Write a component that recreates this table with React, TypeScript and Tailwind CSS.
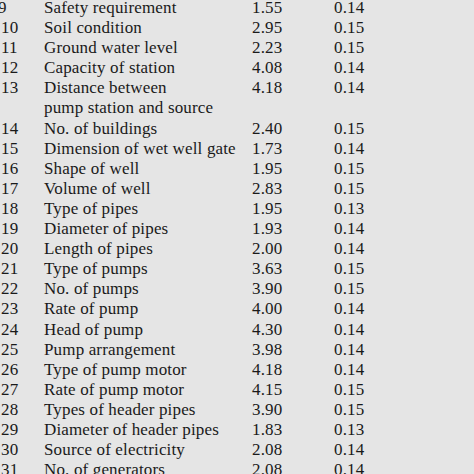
const rows: [string, string[], string, string][] = [
  ["9", ["Safety requirement"], "1.55", "0.14"],
  ["10", ["Soil condition"], "2.95", "0.15"],
  ["11", ["Ground water level"], "2.23", "0.15"],
  ["12", ["Capacity of station"], "4.08", "0.14"],
  ["13", ["Distance between", "pump station and source"], "4.18", "0.14"],
  ["14", ["No. of buildings"], "2.40", "0.15"],
  ["15", ["Dimension of wet well gate"], "1.73", "0.14"],
  ["16", ["Shape of well"], "1.95", "0.15"],
  ["17", ["Volume of well"], "2.83", "0.15"],
  ["18", ["Type of pipes"], "1.95", "0.13"],
  ["19", ["Diameter of pipes"], "1.93", "0.14"],
  ["20", ["Length of pipes"], "2.00", "0.14"],
  ["21", ["Type of pumps"], "3.63", "0.15"],
  ["22", ["No. of pumps"], "3.90", "0.15"],
  ["23", ["Rate of pump"], "4.00", "0.14"],
  ["24", ["Head of pump"], "4.30", "0.14"],
  ["25", ["Pump arrangement"], "3.98", "0.14"],
  ["26", ["Type of pump motor"], "4.18", "0.14"],
  ["27", ["Rate of pump motor"], "4.15", "0.15"],
  ["28", ["Types of header pipes"], "3.90", "0.15"],
  ["29", ["Diameter of header pipes"], "1.83", "0.13"],
  ["30", ["Source of electricity"], "2.08", "0.14"],
  ["31", ["No. of generators"], "2.08", "0.14"],
];

export default function App() {
  return (
    <div
      className="w-[474px] h-[474px] overflow-hidden bg-[#e5e5e5] text-[#1a1a1a] text-[17px] leading-[20.1px] tracking-[0.15px]"
      style={{ fontFamily: '"Liberation Serif", "Times New Roman", serif' }}
    >
      <div className="-mt-[2px] grid grid-cols-[44px_208px_82px_1fr]">
        {rows.map(([n, name, a, b]) => (
          <div key={n} className="contents">
            <div className={n === "9" ? "-ml-[2px]" : "pl-[1px]"}>{n}</div>
            <div className="whitespace-nowrap">
              {name.map((l, i) => (
                <div key={i}>{l}</div>
              ))}
            </div>
            <div>{a}</div>
            <div>{b}</div>
          </div>
        ))}
      </div>
    </div>
  );
}
